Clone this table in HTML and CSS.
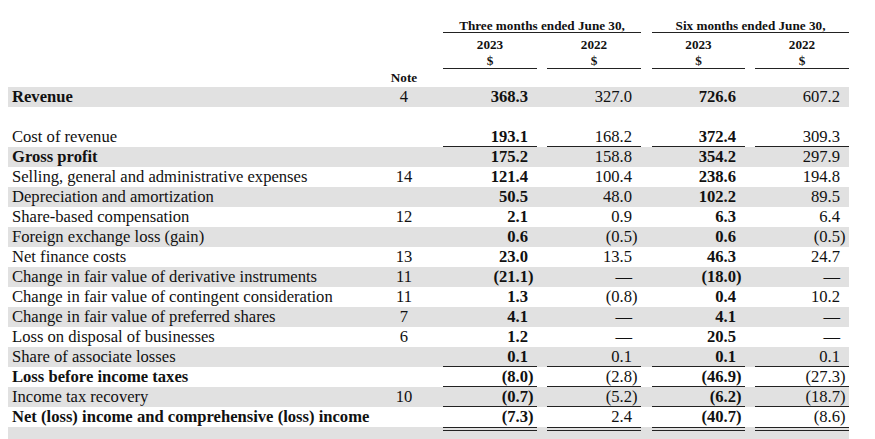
FILE: index.html
```html
<!DOCTYPE html>
<html lang="en">
<head>
<meta charset="utf-8">
<title>Statement of loss</title>
<link rel="stylesheet" href="styles.css">
</head>
<body>
<div class="stmt">
  <div class="row h1">
    <div class="lbl"></div><div class="note"></div>
    <div class="grp g1">Three months ended June 30,</div>
    <div class="grp g2">Six months ended June 30,</div>
  </div>
  <div class="row h2">
    <div class="lbl"></div><div class="note"></div>
    <div class="v c1">2023</div><div class="v c2">2022</div><div class="v c3">2023</div><div class="v c4">2022</div>
  </div>
  <div class="row h3">
    <div class="lbl"></div><div class="note"></div>
    <div class="v c1">$</div><div class="v c2">$</div><div class="v c3">$</div><div class="v c4">$</div>
  </div>
  <div class="row h4">
    <div class="lbl"></div><div class="note">Note</div>
  </div>

  <div class="row r gray b">
    <div class="lbl">Revenue</div><div class="note">4</div>
    <div class="n c1">368.3</div><div class="n c2 reg">327.0</div><div class="n c3">726.6</div><div class="n c4 reg">607.2</div>
  </div>
  <div class="row r"></div>
  <div class="row r ul">
    <div class="lbl">Cost of revenue</div><div class="note"></div>
    <div class="n c1 b">193.1</div><div class="n c2">168.2</div><div class="n c3 b">372.4</div><div class="n c4">309.3</div>
  </div>
  <div class="row r gray b">
    <div class="lbl">Gross profit</div><div class="note"></div>
    <div class="n c1">175.2</div><div class="n c2 reg">158.8</div><div class="n c3">354.2</div><div class="n c4 reg">297.9</div>
  </div>
  <div class="row r">
    <div class="lbl">Selling, general and administrative expenses</div><div class="note">14</div>
    <div class="n c1 b">121.4</div><div class="n c2">100.4</div><div class="n c3 b">238.6</div><div class="n c4">194.8</div>
  </div>
  <div class="row r gray">
    <div class="lbl">Depreciation and amortization</div><div class="note"></div>
    <div class="n c1 b">50.5</div><div class="n c2">48.0</div><div class="n c3 b">102.2</div><div class="n c4">89.5</div>
  </div>
  <div class="row r">
    <div class="lbl">Share-based compensation</div><div class="note">12</div>
    <div class="n c1 b">2.1</div><div class="n c2">0.9</div><div class="n c3 b">6.3</div><div class="n c4">6.4</div>
  </div>
  <div class="row r gray">
    <div class="lbl">Foreign exchange loss (gain)</div><div class="note"></div>
    <div class="n c1 b">0.6</div><div class="n c2">(0.5<span class="cp">)</span></div><div class="n c3 b">0.6</div><div class="n c4">(0.5<span class="cp">)</span></div>
  </div>
  <div class="row r">
    <div class="lbl">Net finance costs</div><div class="note">13</div>
    <div class="n c1 b">23.0</div><div class="n c2">13.5</div><div class="n c3 b">46.3</div><div class="n c4">24.7</div>
  </div>
  <div class="row r gray">
    <div class="lbl">Change in fair value of derivative instruments</div><div class="note">11</div>
    <div class="n c1 b">(21.1<span class="cp">)</span></div><div class="n c2">—</div><div class="n c3 b">(18.0<span class="cp">)</span></div><div class="n c4">—</div>
  </div>
  <div class="row r">
    <div class="lbl">Change in fair value of contingent consideration</div><div class="note">11</div>
    <div class="n c1 b">1.3</div><div class="n c2">(0.8<span class="cp">)</span></div><div class="n c3 b">0.4</div><div class="n c4">10.2</div>
  </div>
  <div class="row r gray">
    <div class="lbl">Change in fair value of preferred shares</div><div class="note">7</div>
    <div class="n c1 b">4.1</div><div class="n c2">—</div><div class="n c3 b">4.1</div><div class="n c4">—</div>
  </div>
  <div class="row r">
    <div class="lbl">Loss on disposal of businesses</div><div class="note">6</div>
    <div class="n c1 b">1.2</div><div class="n c2">—</div><div class="n c3 b">20.5</div><div class="n c4">—</div>
  </div>
  <div class="row r gray ul">
    <div class="lbl">Share of associate losses</div><div class="note"></div>
    <div class="n c1 b">0.1</div><div class="n c2">0.1</div><div class="n c3 b">0.1</div><div class="n c4">0.1</div>
  </div>
  <div class="row r ul">
    <div class="lbl b">Loss before income taxes</div><div class="note"></div>
    <div class="n c1 b">(8.0<span class="cp">)</span></div><div class="n c2">(2.8<span class="cp">)</span></div><div class="n c3 b">(46.9<span class="cp">)</span></div><div class="n c4">(27.3<span class="cp">)</span></div>
  </div>
  <div class="row r gray ul">
    <div class="lbl">Income tax recovery</div><div class="note">10</div>
    <div class="n c1 b">(0.7<span class="cp">)</span></div><div class="n c2">(5.2<span class="cp">)</span></div><div class="n c3 b">(6.2<span class="cp">)</span></div><div class="n c4">(18.7<span class="cp">)</span></div>
  </div>
  <div class="row r">
    <div class="lbl b">Net (loss) income and comprehensive (loss) income</div><div class="note"></div>
    <div class="n c1 b">(7.3<span class="cp">)</span></div><div class="n c2">2.4</div><div class="n c3 b">(40.7<span class="cp">)</span></div><div class="n c4">(8.6<span class="cp">)</span></div>
  </div>
  <div class="row r gray dbl">
    <div class="lbl"></div><div class="note"></div>
    <div class="n c1"></div><div class="n c2"></div><div class="n c3"></div><div class="n c4"></div>
  </div>
</div>
</body>
</html>
```
FILE: styles.css
```css
html, body {
  margin: 0;
  padding: 0;
  background: #ffffff;
}
body {
  font-family: "Liberation Serif", "Times New Roman", serif;
  color: #111111;
  overflow: hidden;
}
.stmt {
  width: 841px;
  margin-left: 8px;
  padding-top: 19px;
}
.row {
  display: flex;
  align-items: stretch;
}
.lbl {
  flex: 0 0 372px;
  padding-left: 4px;
  white-space: nowrap;
}
.note {
  flex: 0 0 40px;
  text-align: center;
}
.c1 { flex: 0 0 94px; margin-left: 19px; }
.c2 { flex: 0 0 94px; margin-left: 10px; }
.c3 { flex: 0 0 93px; margin-left: 11px; }
.c4 { flex: 0 0 94px; margin-left: 10px; }

/* header */
.h1, .h2, .h3, .h4 {
  font-size: 13.2px;
  font-weight: bold;
}
.h1 { height: 14px; line-height: 13px; }
.grp {
  text-align: center;
  border-bottom: 1px solid #222;
  white-space: nowrap;
}
.g1 { flex: 0 0 198px; margin-left: 19px; }
.g2 { flex: 0 0 197px; margin-left: 11px; }
.h2 { padding-top: 4px; height: 16px; line-height: 16px; }
.h2 .v { text-align: center; }
.h3 { height: 16px; line-height: 15px; }
.h3 .v { text-align: center; border-bottom: 1px solid #222; }
.h4 { height: 18px; line-height: 18px; }

/* body rows */
.r {
  height: 20px;
  line-height: 20px;
  font-size: 16.6px;
}
.gray { background: #e1e1e1; }
.b { font-weight: bold; }
.reg { font-weight: normal; }
.gray.b .note { font-weight: normal; }
.n {
  text-align: right;
  padding-right: 9px;
  box-sizing: border-box;
  white-space: nowrap;
}
.cp { margin-right: -0.333em; }
.ul .n { box-shadow: inset 0 -1px 0 #222; }
.dbl .n { border-top: 4px double #222; height: 20px; box-sizing: border-box; }
```
